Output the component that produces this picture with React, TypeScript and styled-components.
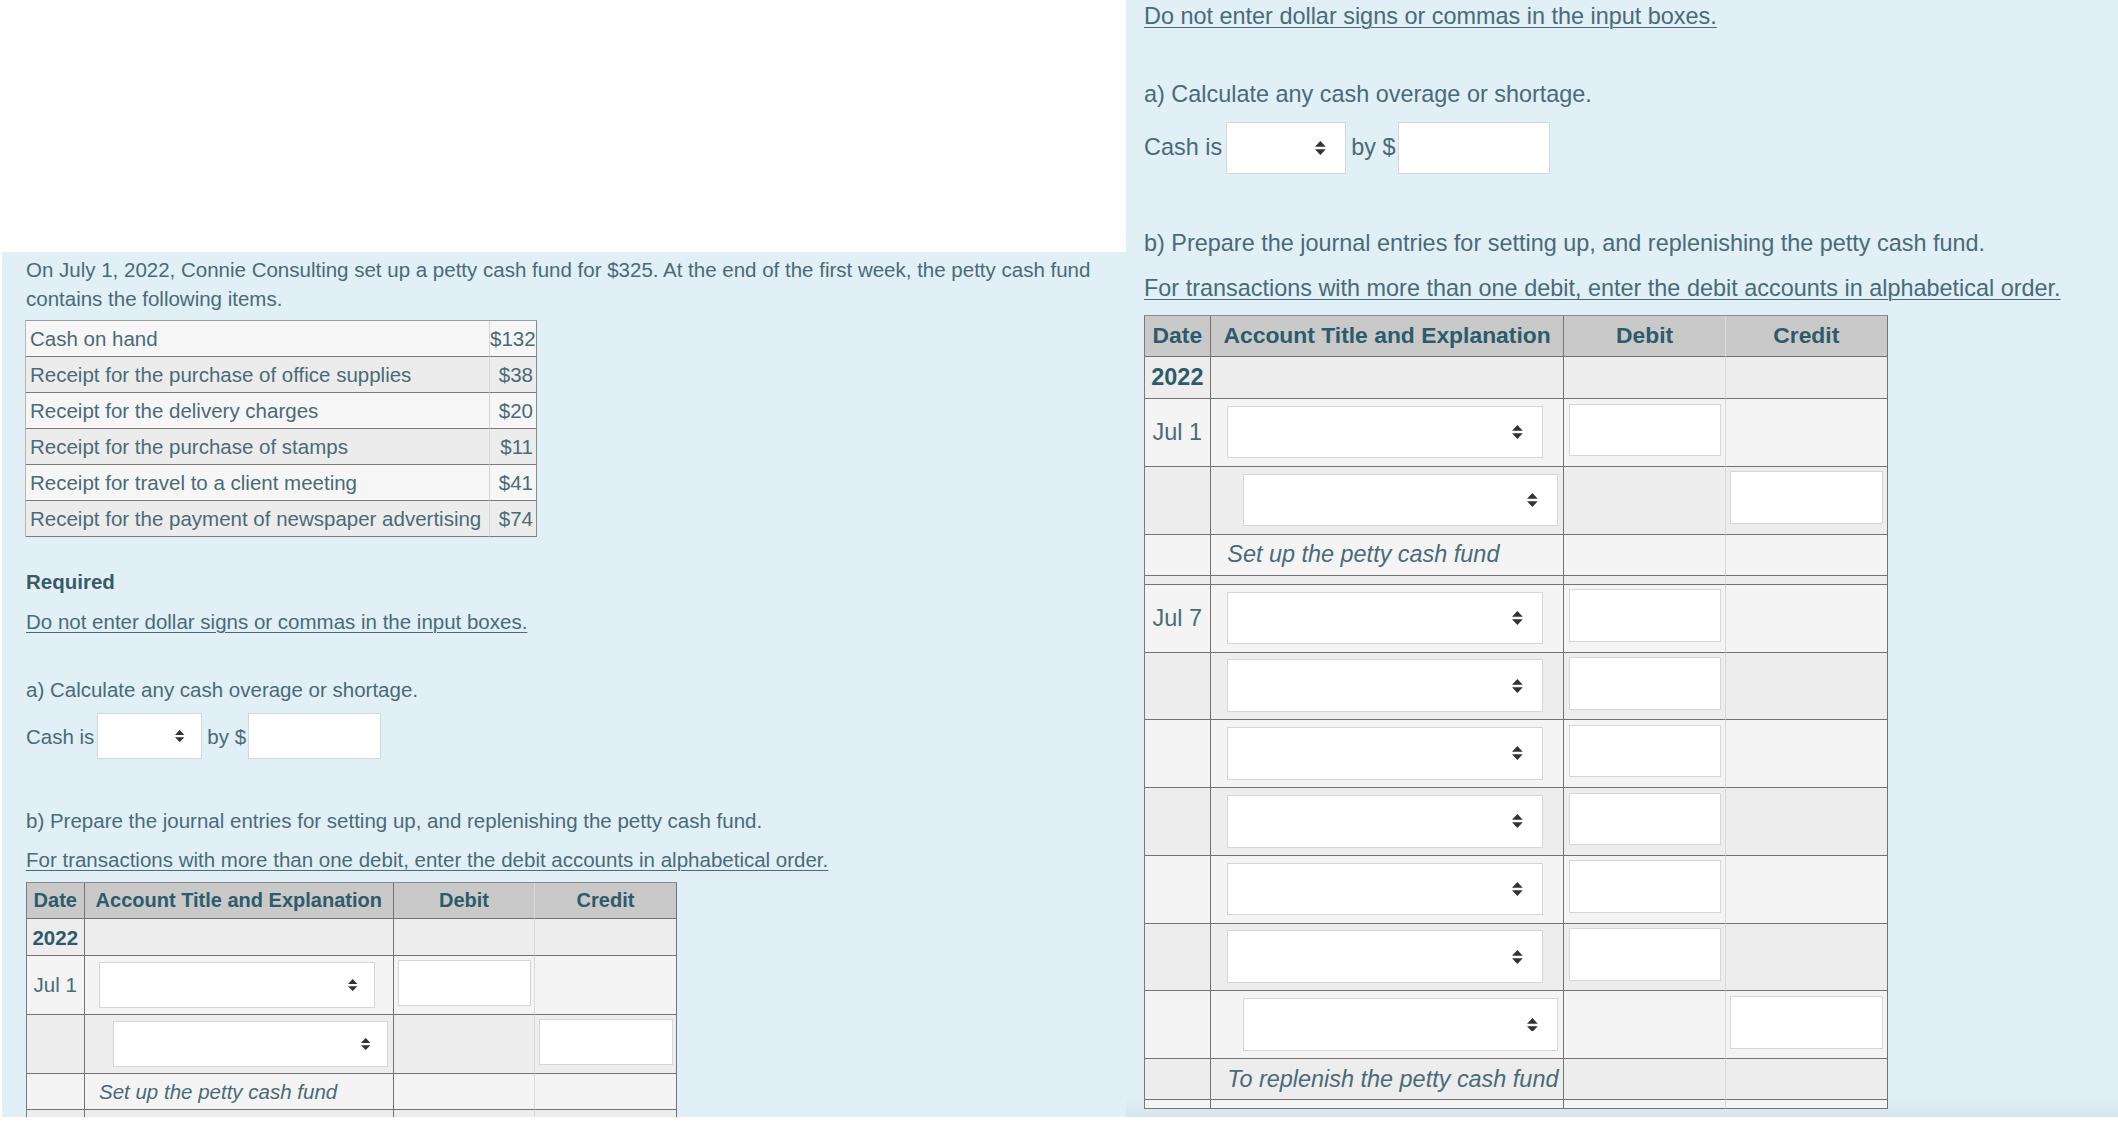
import React from "react";
import styled, { createGlobalStyle } from "styled-components";

// every size is written at the left panel's scale and multiplied by --k
const u = (n: number) => `calc(${n}px * var(--k))`;

const GlobalStyle = createGlobalStyle`
  html, body {
    margin: 0;
    padding: 0;
    background: #ffffff;
  }
  body {
    width: 2118px;
    height: 1122px;
    overflow: hidden;
    font-family: "Liberation Sans", Arial, sans-serif;
  }
`;

const Page = styled.div`
  display: grid;
  grid-template-columns: 1124px 1fr;
  height: 1117px;
  padding-left: 2px;
`;

const LeftColumn = styled.div`
  display: flex;
  flex-direction: column;
  min-height: 0;
`;

const TopGap = styled.div`
  flex: none;
  height: 252px;
  background: #ffffff;
`;

const Panel = styled.section<{ $k: number; $top: number; $side: number; $shade?: boolean }>`
  --k: ${(p) => p.$k};
  flex: 1;
  min-height: 0;
  overflow: hidden;
  padding: ${(p) => p.$top}px ${(p) => p.$side}px 0;
  background: ${(p) =>
    p.$shade
      ? "linear-gradient(to bottom, #e1eff6 0, #e1eff6 calc(100% - 20px), #d6e5ed 100%)"
      : "#e1eff6"};
  color: #4b6a78;
  font-size: ${u(20.5)};
  line-height: ${u(29)};
`;

const Para = styled.p`
  margin: 0;
`;

const ItemsTable = styled.table`
  margin: ${u(7.5)} 0 0 ${u(-1)};
  width: ${u(512)};
  table-layout: fixed;
  border-collapse: separate;
  border-spacing: 0;
  border-top: ${u(1.5)} solid #9a9a9a;
  border-left: ${u(1.5)} solid #b5b5b5;
  font-size: inherit;
  color: inherit;

  tr {
    height: ${u(36)};
  }
  tr:nth-child(odd) {
    background: #f6f6f6;
  }
  tr:nth-child(even) {
    background: #ececec;
  }
`;

const ItemLabel = styled.td`
  width: ${u(459)};
  padding: 0 0 0 ${u(4)};
  white-space: nowrap;
  border-bottom: ${u(1.5)} solid #7b7b7b;
  border-right: ${u(1.5)} solid #d6d6d6;
`;

const ItemAmount = styled.td`
  padding: 0 ${u(3)} 0 0;
  text-align: right;
  border-bottom: ${u(1.5)} solid #7b7b7b;
  border-right: ${u(1.5)} solid #8a8a8a;
`;

const Required = styled.p`
  margin: ${u(30)} 0 0;
  font-weight: 700;
  color: #3a5a68;
`;

const Block = styled.div<{ $gap: number }>`
  margin-top: ${(p) => u(p.$gap)};
`;

const Note = styled.p<{ $gap?: number }>`
  margin: ${(p) => u(p.$gap ?? 0)} 0 0;
  text-decoration: underline;
  text-decoration-thickness: ${u(1.2)};
  text-underline-offset: ${u(3)};
`;

const Step = styled.p<{ $gap: number }>`
  margin: ${(p) => u(p.$gap)} 0 0;
`;

const CashRow = styled.div`
  display: flex;
  align-items: center;
  height: ${u(46)};
  margin-top: ${u(9.5)};
`;

const Inline = styled.span<{ $left: number; $right: number }>`
  margin: 0 ${(p) => u(p.$right)} 0 ${(p) => u(p.$left)};
`;

const SelectBox = styled.div<{ $w: number }>`
  position: relative;
  flex: none;
  width: ${(p) => u(p.$w)};
  height: ${u(46)};
`;

const NativeSelect = styled.select`
  appearance: none;
  -webkit-appearance: none;
  display: block;
  width: 100%;
  height: 100%;
  box-sizing: border-box;
  margin: 0;
  padding: 0 ${u(10)};
  border: ${u(1.5)} solid #d3d7db;
  border-radius: 0;
  background: #ffffff;
  font: inherit;
  color: inherit;
`;

const Arrows = styled.svg`
  position: absolute;
  right: ${u(17.5)};
  top: 50%;
  width: ${u(9.4)};
  height: ${u(12.2)};
  transform: translateY(-50%);
  pointer-events: none;
`;

const TextBox = styled.input<{ $w: number }>`
  display: block;
  flex: none;
  width: ${(p) => u(p.$w)};
  height: ${u(46)};
  box-sizing: border-box;
  margin: 0;
  padding: 0 ${u(8)};
  border: ${u(1.5)} solid #d3d7db;
  border-radius: 0;
  background: #ffffff;
  font: inherit;
  color: inherit;
  outline: none;
`;

const Journal = styled.table`
  margin-top: ${u(8.5)};
  width: ${u(650)};
  table-layout: fixed;
  border-collapse: separate;
  border-spacing: 0;
  border-top: ${u(1.5)} solid #8a8a8a;
  border-left: ${u(1.5)} solid #7a7a7a;
  font-size: inherit;
  color: inherit;

  tbody tr:nth-child(odd) {
    background: #ededed;
  }
  tbody tr:nth-child(even) {
    background: #f4f4f4;
  }
`;

const Row = styled.tr<{ $h: number }>`
  height: ${(p) => u(p.$h)};
`;

type Col = "date" | "account" | "debit" | "credit";

const lineFor = (c: Col) => (c === "debit" ? "#d9d9d9" : "#737373");

const HeadCell = styled.th<{ $col: Col }>`
  padding: 0;
  background: #c9c9c9;
  color: #2e5b6c;
  font-size: ${u(20)};
  font-weight: 700;
  text-align: center;
  white-space: nowrap;
  border-bottom: ${u(1.5)} solid #737373;
  border-right: ${u(1.5)} solid ${(p) => lineFor(p.$col)};
`;

const Cell = styled.td<{ $col: Col; $pad?: number; $top?: boolean }>`
  padding: ${(p) => (p.$top ? u(4) : "0")} 0 0 ${(p) => u(p.$pad ?? 0)};
  vertical-align: ${(p) => (p.$top ? "top" : "middle")};
  text-align: ${(p) => (p.$col === "date" ? "center" : "left")};
  white-space: nowrap;
  border-bottom: ${u(1.5)} solid #737373;
  border-right: ${u(1.5)} solid ${(p) => lineFor(p.$col)};
`;

const Year = styled.span`
  font-weight: 700;
  color: #2e5b6c;
`;

const Explanation = styled.span`
  font-style: italic;
`;

const SelectGap = styled.div`
  padding-top: ${u(2)};
`;

const Dropdown = ({ w }: { w: number }) => (
  <SelectBox $w={w}>
    <NativeSelect defaultValue="">
      <option value=""></option>
    </NativeSelect>
    <Arrows viewBox="0 0 10 13" aria-hidden="true">
      <path d="M5 0L10 5.3H0Z" fill="#333" />
      <path d="M0 7.7H10L5 13Z" fill="#333" />
    </Arrows>
  </SelectBox>
);

const items: [string, string][] = [
  ["Cash on hand", "$132"],
  ["Receipt for the purchase of office supplies", "$38"],
  ["Receipt for the delivery charges", "$20"],
  ["Receipt for the purchase of stamps", "$11"],
  ["Receipt for travel to a client meeting", "$41"],
  ["Receipt for the payment of newspaper advertising", "$74"],
];

const entries = [
  { date: "Jul 1", debits: 1, credits: 1, note: "Set up the petty cash fund" },
  { date: "Jul 7", debits: 6, credits: 1, note: "To replenish the petty cash fund" },
];

const JournalTable = () => (
  <Journal>
    <colgroup>
      <col style={{ width: "calc(57.5px * var(--k))" }} />
      <col style={{ width: "calc(309.5px * var(--k))" }} />
      <col style={{ width: "calc(141px * var(--k))" }} />
      <col style={{ width: "calc(142px * var(--k))" }} />
    </colgroup>
    <thead>
      <Row $h={36.3}>
        <HeadCell $col="date">Date</HeadCell>
        <HeadCell $col="account">Account Title and Explanation</HeadCell>
        <HeadCell $col="debit">Debit</HeadCell>
        <HeadCell $col="credit">Credit</HeadCell>
      </Row>
    </thead>
    <tbody>
      <Row $h={36.5}>
        <Cell $col="date">
          <Year>2022</Year>
        </Cell>
        <Cell $col="account" />
        <Cell $col="debit" />
        <Cell $col="credit" />
      </Row>
      {entries.map((e) => (
        <React.Fragment key={e.date}>
          {Array.from({ length: e.debits }).map((_, i) => (
            <Row $h={59.3} key={`d${i}`}>
              <Cell $col="date">{i === 0 ? e.date : ""}</Cell>
              <Cell $col="account" $top $pad={14.5}>
                <SelectGap>
                  <Dropdown w={276} />
                </SelectGap>
              </Cell>
              <Cell $col="debit" $top $pad={4}>
                <TextBox $w={133} />
              </Cell>
              <Cell $col="credit" />
            </Row>
          ))}
          {Array.from({ length: e.credits }).map((_, i) => (
            <Row $h={59.3} key={`c${i}`}>
              <Cell $col="date" />
              <Cell $col="account" $top $pad={28.5}>
                <SelectGap>
                  <Dropdown w={275} />
                </SelectGap>
              </Cell>
              <Cell $col="debit" />
              <Cell $col="credit" $top $pad={4}>
                <TextBox $w={134} />
              </Cell>
            </Row>
          ))}
          <Row $h={36}>
            <Cell $col="date" />
            <Cell $col="account" $pad={14.5}>
              <Explanation>{e.note}</Explanation>
            </Cell>
            <Cell $col="debit" />
            <Cell $col="credit" />
          </Row>
          <Row $h={8}>
            <Cell $col="date" />
            <Cell $col="account" />
            <Cell $col="debit" />
            <Cell $col="credit" />
          </Row>
        </React.Fragment>
      ))}
    </tbody>
  </Journal>
);

const Instructions = ({ gap }: { gap: number }) => (
  <Block $gap={gap}>
    <Note>Do not enter dollar signs or commas in the input boxes.</Note>
    <Step $gap={39}>a) Calculate any cash overage or shortage.</Step>
    <CashRow>
      <span>Cash is</span>
      <Inline $left={0} $right={3} />
      <Dropdown w={105} />
      <Inline $left={5} $right={2}>
        by $
      </Inline>
      <TextBox $w={133} />
    </CashRow>
    <Step $gap={46.5}>b) Prepare the journal entries for setting up, and replenishing the petty cash fund.</Step>
    <Note $gap={10}>
      For transactions with more than one debit, enter the debit accounts in alphabetical order.
    </Note>
    <JournalTable />
  </Block>
);

export default function App() {
  return (
    <>
      <GlobalStyle />
      <Page>
        <LeftColumn>
          <TopGap />
          <Panel $k={1} $top={2.5} $side={24}>
            <Para>
              On July 1, 2022, Connie Consulting set up a petty cash fund for $325. At the end of the first
              week, the petty cash fund contains the following items.
            </Para>
            <ItemsTable>
              <tbody>
                {items.map(([label, amount]) => (
                  <tr key={label}>
                    <ItemLabel>{label}</ItemLabel>
                    <ItemAmount>{amount}</ItemAmount>
                  </tr>
                ))}
              </tbody>
            </ItemsTable>
            <Required>Required</Required>
            <Instructions gap={10.5} />
          </Panel>
        </LeftColumn>
        <Panel $k={1.143} $top={0} $side={18} $shade>
          <Instructions gap={0} />
        </Panel>
      </Page>
    </>
  );
}
